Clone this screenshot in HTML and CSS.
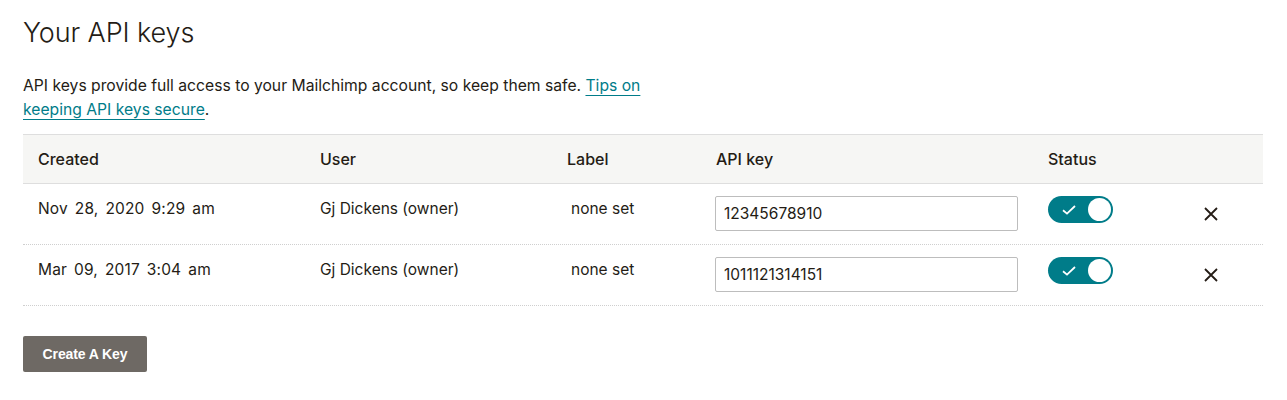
FILE: index.html
```html
<!DOCTYPE html>
<html lang="en">
<head>
<meta charset="utf-8">
<title>Your API keys</title>
<link rel="stylesheet" href="styles.css">
</head>
<body>
<main class="page">
  <h1 class="title">Your API keys</h1>
  <p class="intro">API keys provide full access to your Mailchimp account, so keep them safe. <a href="#" class="link">Tips on keeping API keys secure</a>.</p>

  <div class="table">
    <div class="row head">
      <div class="cell">Created</div>
      <div class="cell">User</div>
      <div class="cell">Label</div>
      <div class="cell">API key</div>
      <div class="cell">Status</div>
      <div class="cell"></div>
    </div>
    <div class="row">
      <div class="cell text date">Nov 28, 2020 9:29 am</div>
      <div class="cell text">Gj Dickens (owner)</div>
      <div class="cell text label">none set</div>
      <div class="cell"><input class="key" type="text" value="12345678910" readonly></div>
      <div class="cell"><span class="toggle"><svg class="check" viewBox="0 0 14 10" width="14" height="10"><path d="M1 5.2 L5 8.6 L13 1" fill="none" stroke="#fff" stroke-width="1.8"/></svg><span class="knob"></span></span></div>
      <div class="cell"><svg class="remove" viewBox="0 0 14 14" width="14" height="14"><path d="M1 1 L13 13 M13 1 L1 13" stroke="#241c15" stroke-width="1.8" fill="none"/></svg></div>
    </div>
    <div class="row">
      <div class="cell text date">Mar 09, 2017 3:04 am</div>
      <div class="cell text">Gj Dickens (owner)</div>
      <div class="cell text label">none set</div>
      <div class="cell"><input class="key" type="text" value="1011121314151" readonly></div>
      <div class="cell"><span class="toggle"><svg class="check" viewBox="0 0 14 10" width="14" height="10"><path d="M1 5.2 L5 8.6 L13 1" fill="none" stroke="#fff" stroke-width="1.8"/></svg><span class="knob"></span></span></div>
      <div class="cell"><svg class="remove" viewBox="0 0 14 14" width="14" height="14"><path d="M1 1 L13 13 M13 1 L1 13" stroke="#241c15" stroke-width="1.8" fill="none"/></svg></div>
    </div>
  </div>

  <button class="btn" type="button">Create A Key</button>
</main>
</body>
</html>
```

FILE: styles.css
```css
* { box-sizing: border-box; }

body {
  margin: 0;
  background: #fff;
  color: #241c15;
  font-family: "Inter", "Liberation Sans", sans-serif;
}

.page {
  padding: 15px 24px 0 23px;
}

.title {
  margin: 0;
  font-size: 27px;
  line-height: 36px;
  font-weight: 300;
  letter-spacing: -0.1px;
}

.intro {
  margin: 23px 0 12px;
  max-width: 660px;
  font-size: 15.7px;
  line-height: 24px;
  font-weight: 400;
}

.link {
  color: #007c89;
  text-decoration: underline;
  text-underline-offset: 4px;
  text-decoration-thickness: 1px;
}

.table {
  display: flex;
  flex-direction: column;
}

.row {
  display: grid;
  grid-template-columns: 282px 247px 149px 332px 156px 1fr;
  border-bottom: 1px dotted #cfcfcf;
}

.row.head {
  background: #f6f6f4;
  border-top: 1px solid #dedede;
  border-bottom: 1px solid #dedede;
  height: 50px;
  align-items: center;
  font-weight: 500;
  font-size: 16px;
}

.cell {
  padding: 0 15px;
}

.row:not(.head) .cell {
  padding-top: 12px;
  padding-bottom: 13px;
  font-size: 15.5px;
}

.text {
  line-height: 26px;
}

.date {
  word-spacing: 2.5px;
  letter-spacing: 0.15px;
}

.label {
  padding-left: 19px !important;
}

.key {
  display: block;
  width: 303px;
  height: 35px;
  margin-left: -1px;
  border: 1px solid #bdbdbd;
  border-radius: 2px;
  padding: 0 8px;
  font-family: inherit;
  font-size: 15.5px;
  color: #241c15;
  background: #fff;
  outline: none;
}

.toggle {
  display: flex;
  align-items: center;
  justify-content: space-between;
  width: 65px;
  height: 27px;
  border-radius: 14px;
  background: #007c89;
  padding: 0 2px 0 14px;
}

.check {
  display: block;
}

.knob {
  width: 23px;
  height: 23px;
  border-radius: 50%;
  background: #fff;
}

.remove {
  display: block;
  margin-top: 11px;
}

.btn {
  margin-top: 30px;
  width: 124px;
  height: 36px;
  border: none;
  border-radius: 2px;
  background: #6e6964;
  color: #fff;
  font-family: "Liberation Sans", sans-serif;
  font-weight: 700;
  font-size: 14px;
  letter-spacing: -0.1px;
}
```
